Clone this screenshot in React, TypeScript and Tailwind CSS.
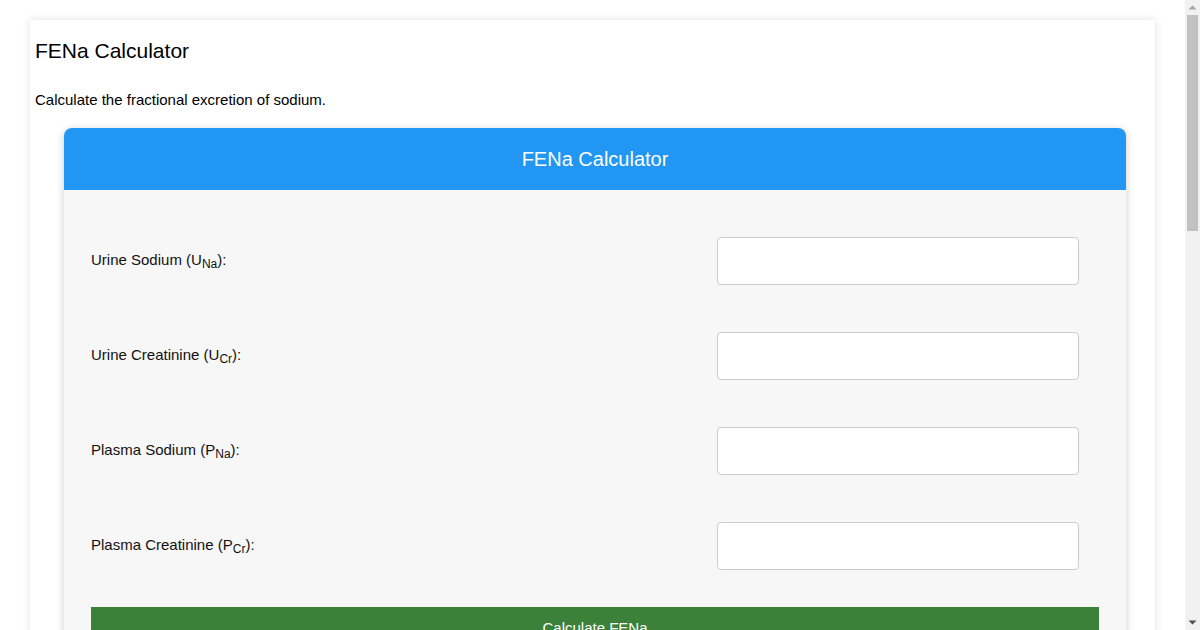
import { useState } from 'react';

const fields = [
    { id: 'una', main: 'Urine Sodium (U', sub: 'Na' },
    { id: 'ucr', main: 'Urine Creatinine (U', sub: 'Cr' },
    { id: 'pna', main: 'Plasma Sodium (P', sub: 'Na' },
    { id: 'pcr', main: 'Plasma Creatinine (P', sub: 'Cr' },
];

// fake browser scrollbar, drawn since headless hides the real one
const ScrollBar = () => (
    <div className="flex h-screen w-[15px] shrink-0 flex-col items-center bg-[#f1f1f1]">
        <svg width="15" height="15" viewBox="0 0 15 15" className="shrink-0">
            <path d="M3.5 9.5 L7.5 5.5 L11.5 9.5 Z" fill="#a3a3a3" />
        </svg>
        <div className="h-[216px] w-[11px] bg-[#c1c1c1]" />
        <div className="flex-1" />
        <svg width="15" height="15" viewBox="0 0 15 15" className="shrink-0">
            <path d="M3.5 5.5 L11.5 5.5 L7.5 9.5 Z" fill="#505050" />
        </svg>
    </div>
);

export default function App() {
    const [values, setValues] = useState<Record<string, string>>({});
    const [result, setResult] = useState<string | null>(null);

    const calculate = () => {
        const una = parseFloat(values.una);
        const ucr = parseFloat(values.ucr);
        const pna = parseFloat(values.pna);
        const pcr = parseFloat(values.pcr);
        if ([una, ucr, pna, pcr].some(v => isNaN(v)) || pna * ucr === 0) {
            setResult('Please enter valid values.');
            return;
        }
        setResult(`FENa: ${(((una * pcr) / (pna * ucr)) * 100).toFixed(2)}%`);
    };

    return (
        <div className="flex h-screen overflow-hidden bg-white font-['Liberation_Sans',Arial,sans-serif] text-black">
            <div className="min-w-0 flex-1 overflow-hidden pt-5 pb-10">
                <div className="mx-[30px] bg-white px-[5px] pb-10 shadow-[0_0_8px_rgba(0,0,0,0.12)]">
                    <h1 className="pt-[18px] text-[21px] leading-[26px]">FENa Calculator</h1>
                    <p className="mt-[26px] text-[15px] leading-[20px]">Calculate the fractional excretion of sodium.</p>

                    <div className="mt-[18px] ml-[29px] mr-[24px] overflow-hidden rounded-t-lg bg-[#f7f7f7] shadow-[0_2px_8px_rgba(0,0,0,0.2)]">
                        <div className="flex h-[62px] items-center justify-center bg-[#2196f3] text-[20px] text-white">
                            FENa Calculator
                        </div>
                        <div className="px-[27px] pt-[23px] pb-8">
                            {fields.map(f => (
                                <div key={f.id} className="flex h-[95px] items-center justify-between">
                                    <label className="text-[15px] text-[#111]">
                                        {f.main}
                                        <sub className="text-[12px]">{f.sub}</sub>):
                                    </label>
                                    <input
                                        type="number"
                                        className="mr-5 h-[48px] w-[362px] rounded border border-[#ccc] bg-white px-3 text-[15px] outline-none"
                                        value={values[f.id] ?? ''}
                                        onChange={e => setValues({ ...values, [f.id]: e.target.value })}
                                    />
                                </div>
                            ))}
                            <button
                                onClick={calculate}
                                className="mt-[14px] flex h-[42px] w-full items-center justify-center bg-[#3b8139] text-[15px] text-white"
                            >
                                Calculate FENa
                            </button>
                            <div className="mt-5 min-h-[40px] text-center text-[16px]">{result}</div>
                        </div>
                    </div>
                </div>
            </div>
            <ScrollBar />
        </div>
    );
}
